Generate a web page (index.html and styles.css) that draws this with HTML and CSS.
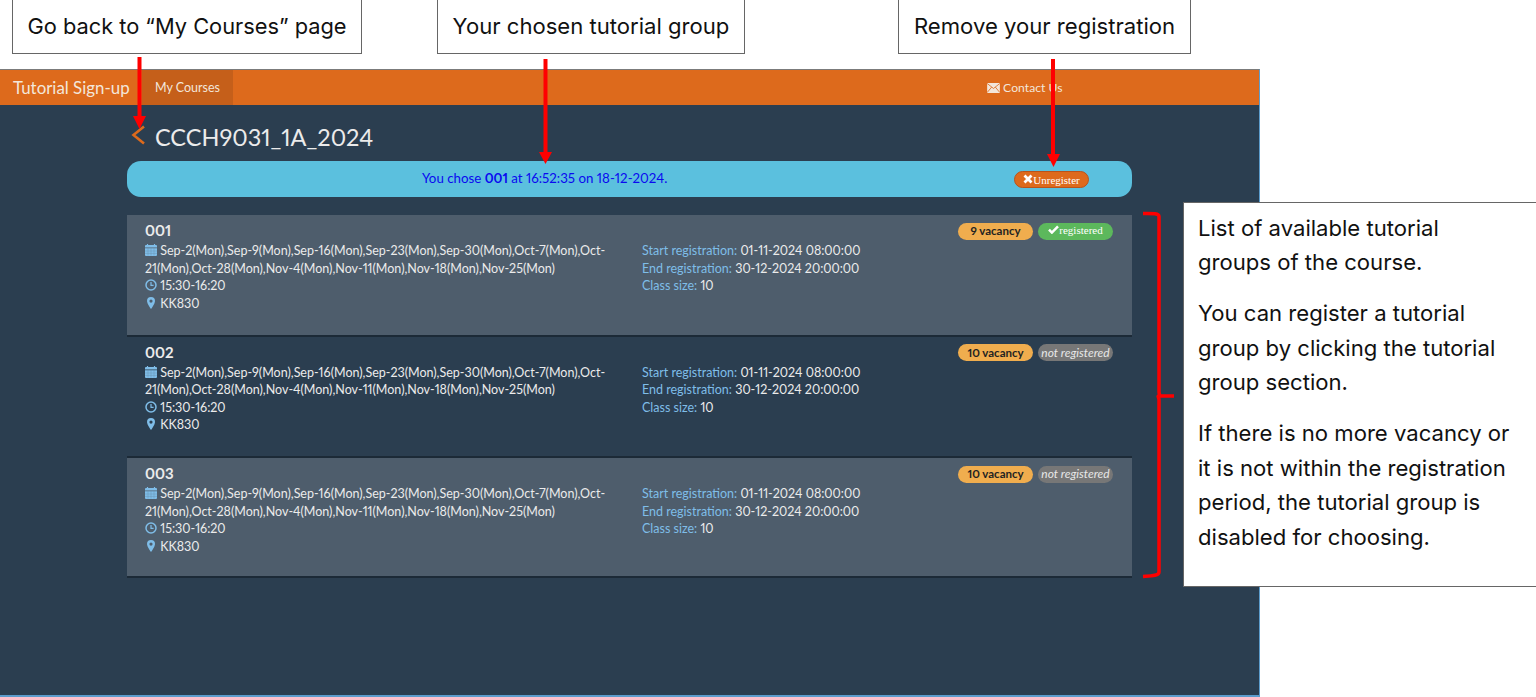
FILE: index.html
```html
<!DOCTYPE html>
<html lang="en">
<head>
<meta charset="utf-8">
<title>Tutorial Sign-up</title>
<link rel="stylesheet" href="styles.css">
</head>
<body>
<svg class="defs" width="0" height="0" aria-hidden="true">
  <symbol id="i-cal" viewBox="0 0 12 12"><path d="M0 4.200h12v6.800a1 1 0 0 1-1 1H1a1 1 0 0 1-1-1zM1 1h10a1 1 0 0 1 1 1v1.400H0V2a1 1 0 0 1 1-1z" fill="currentColor"/><path d="M2.500 0v2M9.500 0v2" stroke="currentColor" stroke-width="1.200"/><path d="M0 7h12M0 9.400h12M3 4.500v7M6 4.500v7M9 4.500v7" stroke="#4e5d6c" stroke-width=".4" opacity=".5"/></symbol>
  <symbol id="i-clock" viewBox="0 0 12 12"><circle cx="6" cy="6" r="5" fill="none" stroke="currentColor" stroke-width="1.500"/><path d="M6 3v3.300h2.600" fill="none" stroke="currentColor" stroke-width="1.200"/></symbol>
  <symbol id="i-pin" viewBox="0 0 12 12"><path fill-rule="evenodd" d="M6 0a4 4 0 0 1 4 4c0 2.700-4 8-4 8S2 6.700 2 4a4 4 0 0 1 4-4zm0 2.500a1.600 1.600 0 1 0 0 3.200 1.600 1.600 0 0 0 0-3.200z" fill="currentColor"/></symbol>
  <symbol id="i-check" viewBox="0 0 12 10"><path d="M1 5.200l3.200 3.200L11 1.600" fill="none" stroke="currentColor" stroke-width="2.800"/></symbol>
  <symbol id="i-x" viewBox="0 0 10 10"><path d="M1.500 1.500l7 7M8.500 1.500l-7 7" fill="none" stroke="currentColor" stroke-width="2.800"/></symbol>
</svg>

<div class="stage">
  <div class="app">
    <nav class="navbar">
      <a class="brand">Tutorial Sign-up</a>
      <a class="tab">My Courses</a>
      <a class="contact">
        <svg class="mail" viewBox="0 0 14 11"><path d="M0 0h14v11H0z" fill="#f3e6da"/><path d="M0 .5l7 5.500 7-5.500M0 10.500l5-6M14 10.500l-5-6" fill="none" stroke="#dd6a1c" stroke-width=".9"/></svg>
        Contact Us
      </a>
    </nav>
    <main class="content">
      <h1 class="course">
        <svg class="back" viewBox="0 0 15 20"><path d="M13 1.500L2.500 10 13 18.500" fill="none" stroke="#dd6a1c" stroke-width="2.600"/></svg>
        CCCH9031_1A_2024
      </h1>
      <div class="alert">
        <p class="chosen">You chose <b>001</b> at 16:52:35 on 18-12-2024.</p>
        <span class="unreg"><svg class="ic-x"><use href="#i-x"/></svg>Unregister</span>
      </div>

      <section class="group shaded">
        <div class="col">
          <h2>001</h2>
          <div class="dates"><svg class="ic"><use href="#i-cal"/></svg> Sep-2(Mon),Sep-9(Mon),Sep-16(Mon),Sep-23(Mon),Sep-30(Mon),Oct-7(Mon),Oct-21(Mon),Oct-28(Mon),Nov-4(Mon),Nov-11(Mon),Nov-18(Mon),Nov-25(Mon)</div>
          <div><svg class="ic"><use href="#i-clock"/></svg> 15:30-16:20</div>
          <div><svg class="ic"><use href="#i-pin"/></svg> KK830</div>
        </div>
        <div class="col info">
          <div><span class="k">Start registration:</span> 01-11-2024 08:00:00</div>
          <div><span class="k">End registration:</span> 30-12-2024 20:00:00</div>
          <div><span class="k">Class size:</span> 10</div>
        </div>
        <div class="badges">
          <span class="badge vac">9 vacancy</span>
          <span class="badge reg"><svg class="ic-c"><use href="#i-check"/></svg>registered</span>
        </div>
      </section>

      <section class="group">
        <div class="col">
          <h2>002</h2>
          <div class="dates"><svg class="ic"><use href="#i-cal"/></svg> Sep-2(Mon),Sep-9(Mon),Sep-16(Mon),Sep-23(Mon),Sep-30(Mon),Oct-7(Mon),Oct-21(Mon),Oct-28(Mon),Nov-4(Mon),Nov-11(Mon),Nov-18(Mon),Nov-25(Mon)</div>
          <div><svg class="ic"><use href="#i-clock"/></svg> 15:30-16:20</div>
          <div><svg class="ic"><use href="#i-pin"/></svg> KK830</div>
        </div>
        <div class="col info">
          <div><span class="k">Start registration:</span> 01-11-2024 08:00:00</div>
          <div><span class="k">End registration:</span> 30-12-2024 20:00:00</div>
          <div><span class="k">Class size:</span> 10</div>
        </div>
        <div class="badges">
          <span class="badge vac">10 vacancy</span>
          <span class="badge not">not registered</span>
        </div>
      </section>

      <section class="group shaded">
        <div class="col">
          <h2>003</h2>
          <div class="dates"><svg class="ic"><use href="#i-cal"/></svg> Sep-2(Mon),Sep-9(Mon),Sep-16(Mon),Sep-23(Mon),Sep-30(Mon),Oct-7(Mon),Oct-21(Mon),Oct-28(Mon),Nov-4(Mon),Nov-11(Mon),Nov-18(Mon),Nov-25(Mon)</div>
          <div><svg class="ic"><use href="#i-clock"/></svg> 15:30-16:20</div>
          <div><svg class="ic"><use href="#i-pin"/></svg> KK830</div>
        </div>
        <div class="col info">
          <div><span class="k">Start registration:</span> 01-11-2024 08:00:00</div>
          <div><span class="k">End registration:</span> 30-12-2024 20:00:00</div>
          <div><span class="k">Class size:</span> 10</div>
        </div>
        <div class="badges">
          <span class="badge vac">10 vacancy</span>
          <span class="badge not">not registered</span>
        </div>
      </section>
    </main>
  </div>

  <div class="callout c1">Go back to “My Courses” page</div>
  <div class="callout c2">Your chosen tutorial group</div>
  <div class="callout c3">Remove your registration</div>
  <div class="callout note">
    <p>List of available tutorial<br>groups of the course.</p>
    <p>You can register a tutorial<br>group by clicking the tutorial<br>group section.</p>
    <p>If there is no more vacancy or<br>it is not within the registration<br>period, the tutorial group is<br>disabled for choosing.</p>
  </div>

  <svg class="marks" viewBox="0 0 1536 697" aria-hidden="true">
    <g fill="#ff0000">
      <rect x="137.500" y="57" width="4" height="60"/><path d="M133 116h13l-6.500 13z"/>
      <rect x="543.500" y="59" width="4" height="94"/><path d="M539 152h13l-6.500 12z"/>
      <rect x="1051" y="59" width="4" height="97"/><path d="M1047 154h13l-6.500 13z"/>
    </g>
    <path d="M1143 213.500c8 0 16-.5 16 3V392c0 3 2 4 0 4 3 0 8 0 15 0M1159 396c-2 0 0 1 0 4v172c0 4-8 4-16 4.500" fill="none" stroke="#ff0000" stroke-width="3.500"/>
  </svg>
</div>
</body>
</html>
```
FILE: styles.css
```css
* { box-sizing: border-box; }
html, body { margin: 0; padding: 0; background: #fff; }
.defs { position: absolute; }
.stage { position: relative; width: 1536px; height: 697px; overflow: hidden; font-family: Lato, sans-serif; font-variant-numeric: proportional-nums; }

.app {
  position: absolute; top: 69px; left: 0; width: 1260px; height: 628px;
  background: #2b3e50; color: #ebebeb;
  border-top: 1px solid #7b7b7b; border-right: 1px solid #5c9ccc; border-bottom: 2px solid #5c9ccc;
}
.navbar { display: flex; align-items: stretch; height: 35px; background: #dd6a1c; font-size: 12.500px; color: #f3e6da; }
.brand { width: 142px; padding-left: 13px; font-size: 16.900px; line-height: 36px; }
.tab { width: 91px; background: #c55f1a; text-align: center; line-height: 35px; }
.contact { margin-left: 754px; line-height: 35px; white-space: nowrap; font-size: 12.200px; }
.mail { width: 13px; height: 10px; vertical-align: -1px; }

.content { width: 1005px; margin-left: 127px; }
.course { display: flex; align-items: center; margin: 0; height: 56px; padding-top: 8px; font-size: 23.500px; font-weight: 400; color: #ebebeb; }
.back { width: 15px; height: 20px; margin: -4px 9px 0 4px; }

.alert { position: relative; display: flex; align-items: center; height: 36px; padding-bottom: 2px; background: #5bc0de; border-radius: 14px; font-size: 13.300px; color: #0a0af0; }
.chosen { margin: 0 0 0 295px; }
.unreg {
  position: absolute; left: 887px; top: 10px; width: 75px; height: 17px;
  display: flex; align-items: center; justify-content: center;
  background: #dd6a1c; border: 1px solid #b9531a; border-radius: 9px;
  color: #fff; font: 11px "Liberation Serif", serif; padding-top: 1px;
}
.ic-x { width: 10px; height: 10px; color: #fff; margin-top: -2px; }

.group { position: relative; display: flex; height: 121.500px; padding: 6px 18px 0; font-size: 12.500px; line-height: 17.500px; color: #ebebeb; border-bottom: 2px solid #1c2a37; }
.group:last-child { height: 120px; }
.alert + .group { margin-top: 18px; }
.shaded { background: #4e5d6c; }
h2 { margin: 0 0 2px; font-size: 15px; font-weight: 700; line-height: 19px; color: #ebebeb; }
.col { flex: none; width: 497px; padding-right: 28px; }
.info { padding-top: 21px; }
.k { color: #7fbde8; }
.ic { width: 12px; height: 12px; color: #7fbde8; vertical-align: -1px; }

.badges { position: absolute; top: 7.500px; right: 19px; display: flex; gap: 5px; }
.badge { display: flex; align-items: center; justify-content: center; width: 75px; height: 17px; border-radius: 9px; font-size: 11.500px; white-space: nowrap; }
.vac { background: #f0ad4e; color: #222; font-weight: 700; }
.reg { background: #5cb85c; color: #fff; font-family: "Liberation Serif", serif; font-size: 11px; }
.not { background: #777; color: #e8e8e8; font-style: italic; font-size: 12px; }
.ic-c { width: 11px; height: 9px; color: #fff; margin-top: -3px; }

.callout {
  position: absolute; background: #fff; border: 1px solid #666;
  color: #111; font: 22.100px/1 Inter, sans-serif; white-space: nowrap;
  display: flex; align-items: center; justify-content: center;
}
.c1 { left: 12px; top: -1px; width: 350px; height: 55px; font-size: 21.800px; }
.c2 { left: 437px; top: -1px; width: 308px; height: 55px; }
.c3 { left: 898px; top: -1px; width: 293px; height: 55px; }
.note { display: block; left: 1183px; top: 202px; width: 360px; height: 385px; padding: 7.500px 0 0 14px; line-height: 34.500px; }
.note p { margin: 0 0 16.500px; }

.marks { position: absolute; left: 0; top: 0; width: 1536px; height: 697px; pointer-events: none; }
```
